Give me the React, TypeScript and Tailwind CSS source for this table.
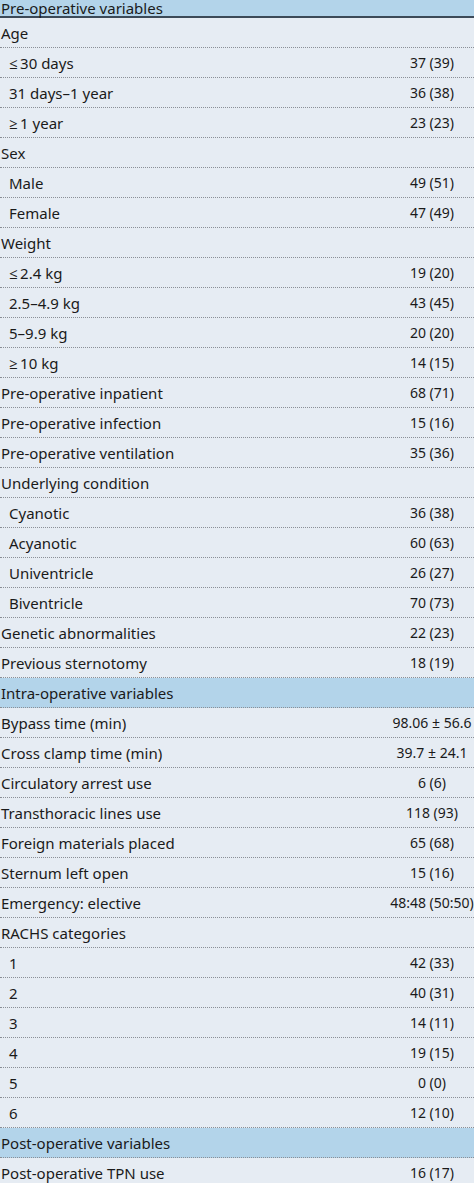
type Row = {
  label: string;
  value?: string;
  indent?: boolean;
  header?: boolean;
};

const rows: Row[] = [
  { label: 'Pre-operative variables', header: true },
  { label: 'Age' },
  { label: '≤\u200930 days', value: '37 (39)', indent: true },
  { label: '31 days–1 year', value: '36 (38)', indent: true },
  { label: '≥\u20091 year', value: '23 (23)', indent: true },
  { label: 'Sex' },
  { label: 'Male', value: '49 (51)', indent: true },
  { label: 'Female', value: '47 (49)', indent: true },
  { label: 'Weight' },
  { label: '≤\u20092.4 kg', value: '19 (20)', indent: true },
  { label: '2.5–4.9 kg', value: '43 (45)', indent: true },
  { label: '5–9.9 kg', value: '20 (20)', indent: true },
  { label: '≥\u200910 kg', value: '14 (15)', indent: true },
  { label: 'Pre-operative inpatient', value: '68 (71)' },
  { label: 'Pre-operative infection', value: '15 (16)' },
  { label: 'Pre-operative ventilation', value: '35 (36)' },
  { label: 'Underlying condition' },
  { label: 'Cyanotic', value: '36 (38)', indent: true },
  { label: 'Acyanotic', value: '60 (63)', indent: true },
  { label: 'Univentricle', value: '26 (27)', indent: true },
  { label: 'Biventricle', value: '70 (73)', indent: true },
  { label: 'Genetic abnormalities', value: '22 (23)' },
  { label: 'Previous sternotomy', value: '18 (19)' },
  { label: 'Intra-operative variables', header: true },
  { label: 'Bypass time (min)', value: '98.06 ± 56.6' },
  { label: 'Cross clamp time (min)', value: '39.7 ± 24.1' },
  { label: 'Circulatory arrest use', value: '6 (6)' },
  { label: 'Transthoracic lines use', value: '118 (93)' },
  { label: 'Foreign materials placed', value: '65 (68)' },
  { label: 'Sternum left open', value: '15 (16)' },
  { label: 'Emergency: elective', value: '48:48 (50:50)' },
  { label: 'RACHS categories' },
  { label: '1', value: '42 (33)', indent: true },
  { label: '2', value: '40 (31)', indent: true },
  { label: '3', value: '14 (11)', indent: true },
  { label: '4', value: '19 (15)', indent: true },
  { label: '5', value: '0 (0)', indent: true },
  { label: '6', value: '12 (10)', indent: true },
  { label: 'Post-operative variables', header: true },
  { label: 'Post-operative TPN use', value: '16 (17)' },
];

export default function App() {
  return (
    <div
      className="w-[474px] h-[1183px] overflow-hidden bg-[#e6ecf3] text-[#1a1a1a]"
      style={{ fontFamily: '"Noto Sans", "Open Sans", sans-serif' }}
    >
      {rows.map((row, i) => (
        <div
          key={i}
          className={`flex items-center ${i === 0 ? 'h-[18px] pt-[1px] border-b-2 border-[#3c4a58]' : 'h-[30px] border-b border-dotted border-[#8a8f96]'} ${
            row.header ? 'bg-[#b3d4ea]' : ''
          }`}
        >
          <div
            className={`flex-1 whitespace-nowrap text-[15px] ${i === 0 ? 'leading-[15px]' : 'leading-[20px]'} ${
              row.indent ? 'pl-[9px]' : 'pl-[1px]'
            }`}
          >
            {row.label}
          </div>
          <div className="w-[84px] whitespace-nowrap text-center text-[14px] leading-[20px]">{row.value}</div>
        </div>
      ))}
    </div>
  );
}
